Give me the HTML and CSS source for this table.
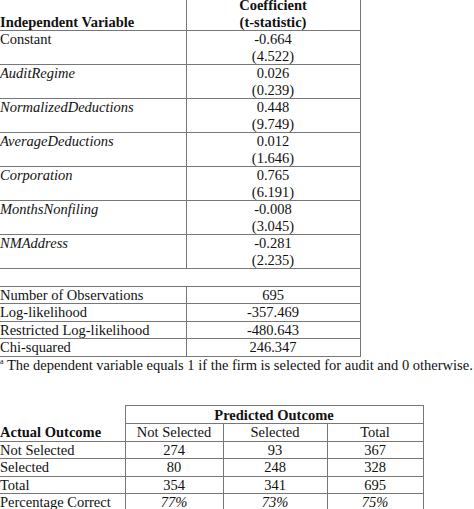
FILE: index.html
```html
<!DOCTYPE html>
<html>
<head>
<meta charset="utf-8">
<link rel="stylesheet" href="styles.css">
</head>
<body>
<table class="reg">
  <colgroup><col class="c-var"><col class="c-coef"></colgroup>
  <tr class="head">
    <th class="lab">Independent Variable</th>
    <th class="val">Coefficient<br>(t-statistic)</th>
  </tr>
  <tr><td class="lab">Constant</td><td class="val">-0.664<br>(4.522)</td></tr>
  <tr><td class="lab it">AuditRegime</td><td class="val">0.026<br>(0.239)</td></tr>
  <tr><td class="lab it">NormalizedDeductions</td><td class="val">0.448<br>(9.749)</td></tr>
  <tr><td class="lab it">AverageDeductions</td><td class="val">0.012<br>(1.646)</td></tr>
  <tr><td class="lab it">Corporation</td><td class="val">0.765<br>(6.191)</td></tr>
  <tr><td class="lab it">MonthsNonfiling</td><td class="val">-0.008<br>(3.045)</td></tr>
  <tr><td class="lab it">NMAddress</td><td class="val">-0.281<br>(2.235)</td></tr>
  <tr><td class="lab span" colspan="2">&nbsp;</td></tr>
  <tr><td class="lab">Number of Observations</td><td class="val">695</td></tr>
  <tr><td class="lab">Log-likelihood</td><td class="val">-357.469</td></tr>
  <tr><td class="lab">Restricted Log-likelihood</td><td class="val">-480.643</td></tr>
  <tr><td class="lab">Chi-squared</td><td class="val">246.347</td></tr>
</table>
<p class="note"><sup>a</sup> The dependent variable equals 1 if the firm is selected for audit and 0 otherwise.</p>

<table class="conf">
  <colgroup><col class="k1"><col class="k2"><col class="k3"><col class="k4"></colgroup>
  <tr class="top">
    <th class="lab corner" rowspan="2">Actual Outcome</th>
    <th class="val" colspan="3">Predicted Outcome</th>
  </tr>
  <tr><td class="val">Not Selected</td><td class="val">Selected</td><td class="val">Total</td></tr>
  <tr><td class="lab">Not Selected</td><td class="val">274</td><td class="val">93</td><td class="val">367</td></tr>
  <tr><td class="lab">Selected</td><td class="val">80</td><td class="val">248</td><td class="val">328</td></tr>
  <tr><td class="lab">Total</td><td class="val">354</td><td class="val">341</td><td class="val">695</td></tr>
  <tr><td class="lab">Percentage Correct</td><td class="val it">77%</td><td class="val it">73%</td><td class="val it">75%</td></tr>
</table>
</body>
</html>
```
FILE: styles.css
```css
html, body {
  margin: 0;
  padding: 0;
  background: #fff;
}
body {
  font-family: "Liberation Serif", "Times New Roman", serif;
  font-size: 14.5px;
  color: #111;
  overflow: hidden;
}
table {
  border-collapse: collapse;
  table-layout: fixed;
}
th, td {
  padding: 0;
  font-weight: normal;
  vertical-align: top;
  border: 1px solid #777;
}
th { font-weight: bold; }
.lab {
  text-align: left;
  border-left: none;
  padding-left: 1px;
  white-space: nowrap;
}
.val { text-align: center; }
.it { font-style: italic; }

/* regression table */
.reg {
  margin: -4px 0 0 -1px;
  width: 361px;
  line-height: 16.5px;
}
.reg .c-var { width: 187px; }
.reg .c-coef { width: 174px; }
.reg .head th { vertical-align: bottom; }

.note {
  margin: 0;
  line-height: 16.5px;
  white-space: nowrap;
}
.note sup {
  font-size: 8px;
  line-height: 0;
  vertical-align: 6px;
}

/* classification table */
.conf {
  margin: 32px 0 0 -1px;
  width: 424px;
  line-height: 16.4px;
}
.conf .k1 { width: 126px; }
.conf .k2 { width: 98px; }
.conf .k3 { width: 104px; }
.conf .k4 { width: 96px; }
.conf .top th { padding-top: 1px; }
.conf .corner {
  border-top: none;
  vertical-align: bottom;
}
```
